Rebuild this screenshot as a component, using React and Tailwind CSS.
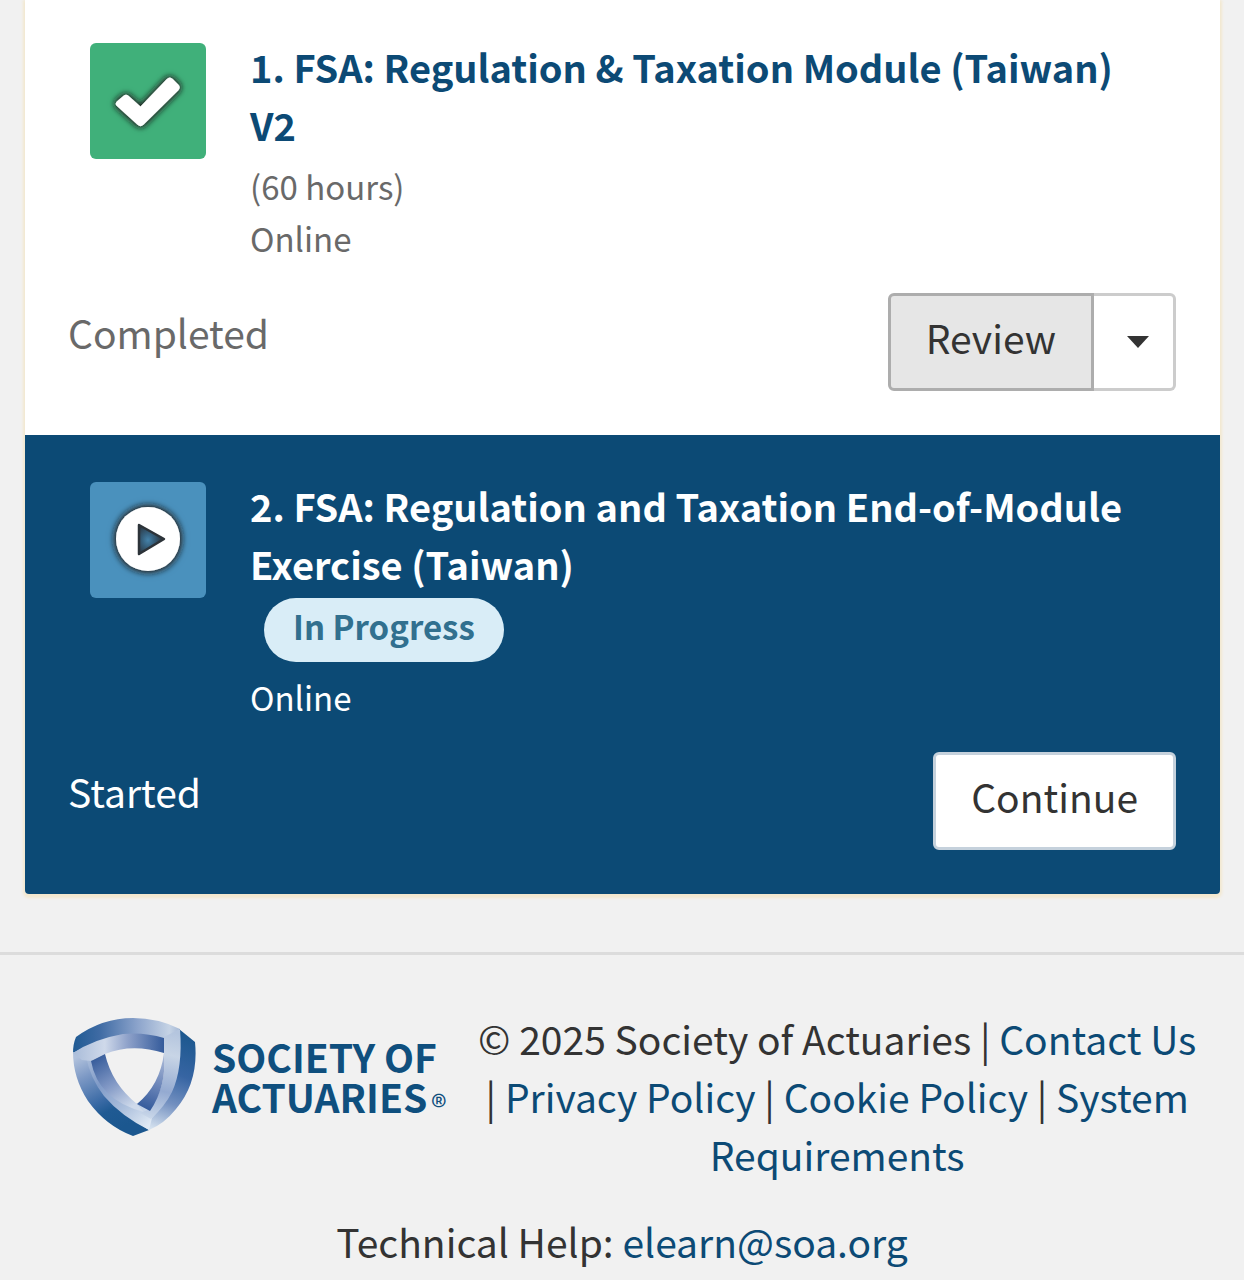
import React from 'react';

function CheckTile() {
    return (
        <svg viewBox="0 0 116 116" className="size-[116px] shrink-0" aria-hidden="true">
            <defs>
                <filter id="checkGlow" x="-40%" y="-40%" width="180%" height="180%">
                    <feDropShadow dx="0" dy="0" stdDeviation="3" floodColor="#222" floodOpacity="1" />
                    <feDropShadow dx="0" dy="0" stdDeviation="2.5" floodColor="#333" floodOpacity="0.8" />
                </filter>
            </defs>
            <rect width="116" height="116" rx="6" fill="#40b07a" />
            <path
                d="M26.8 58.5 L33.2 53 Q36 50.5 38.8 53 L50.5 63.500 L76.8 36 Q79.8 32.8 82.8 36 L88.5 41.8 Q91 44.5 88.5 47.3 L53.5 81.8 Q50.5 84.5 47.5 81.8 L26.8 63 Q24.5 60.8 26.8 58.500 Z"
                fill="#fff"
                filter="url(#checkGlow)"
            />
        </svg>
    );
}

function PlayTile() {
    return (
        <svg viewBox="0 0 116 116" className="size-[116px] shrink-0" aria-hidden="true">
            <defs>
                <filter id="playGlow" x="-40%" y="-40%" width="180%" height="180%">
                    <feDropShadow dx="0" dy="0" stdDeviation="3.5" floodColor="#222" floodOpacity="1" />
                    <feDropShadow dx="0" dy="0" stdDeviation="2.5" floodColor="#333" floodOpacity="0.8" />
                </filter>
                <radialGradient id="playFill" cx="0.36" cy="0.52" r="0.6">
                    <stop offset="0" stopColor="#4482aa" />
                    <stop offset="0.4" stopColor="#355f7c" />
                    <stop offset="1" stopColor="#2b3138" />
                </radialGradient>
            </defs>
            <rect width="116" height="116" rx="6" fill="#4a91bd" />
            <circle cx="58" cy="57" r="32" fill="#fff" filter="url(#playGlow)" />
            <path
                d="M49 43 L74 57 L49 72 Z"
                fill="url(#playFill)"
                stroke="#2c3339"
                strokeWidth="2.5"
                strokeLinejoin="round"
            />
        </svg>
    );
}

function Shield() {
    return (
        <svg viewBox="0 0 124 120" className="w-[124px] shrink-0" aria-hidden="true">
            <defs>
                <linearGradient id="outerTop" x1="0" y1="0" x2="1" y2="0">
                    <stop offset="0" stopColor="#1f5a93" />
                    <stop offset="0.25" stopColor="#3f6ba4" />
                    <stop offset="0.6" stopColor="#8ba3cb" />
                    <stop offset="0.9" stopColor="#c5d3e5" />
                    <stop offset="1" stopColor="#a6b9d6" />
                </linearGradient>
                <linearGradient id="innerTop" x1="0" y1="0" x2="1" y2="0">
                    <stop offset="0" stopColor="#a9bcd9" />
                    <stop offset="0.35" stopColor="#cfd9ea" />
                    <stop offset="0.6" stopColor="#8fa2ca" />
                    <stop offset="1" stopColor="#345b9b" />
                </linearGradient>
                <linearGradient id="outerLeft" gradientUnits="userSpaceOnUse" x1="8" y1="38" x2="45" y2="112">
                    <stop offset="0" stopColor="#b0c1dc" />
                    <stop offset="0.25" stopColor="#7d99c5" />
                    <stop offset="0.6" stopColor="#3a6aa5" />
                    <stop offset="0.75" stopColor="#1f5a93" />
                    <stop offset="1" stopColor="#1b578f" />
                </linearGradient>
                <linearGradient id="midLeft" gradientUnits="userSpaceOnUse" x1="14" y1="42" x2="76" y2="108">
                    <stop offset="0" stopColor="#a9bcd9" />
                    <stop offset="0.3" stopColor="#7f9ac7" />
                    <stop offset="0.65" stopColor="#a9bddb" />
                    <stop offset="1" stopColor="#dfe9f4" />
                </linearGradient>
                <linearGradient id="innerLeft" gradientUnits="userSpaceOnUse" x1="26" y1="40" x2="58" y2="90">
                    <stop offset="0" stopColor="#3a5f9d" />
                    <stop offset="0.5" stopColor="#8198c5" />
                    <stop offset="1" stopColor="#cfdaeb" />
                </linearGradient>
                <linearGradient id="midRight" gradientUnits="userSpaceOnUse" x1="100" y1="14" x2="80" y2="104">
                    <stop offset="0" stopColor="#b4c5de" />
                    <stop offset="0.25" stopColor="#c8d5e6" />
                    <stop offset="0.65" stopColor="#94aad1" />
                    <stop offset="1" stopColor="#cfdcec" />
                </linearGradient>
                <linearGradient id="outerRight" gradientUnits="userSpaceOnUse" x1="115" y1="18" x2="80" y2="110">
                    <stop offset="0" stopColor="#1d588f" />
                    <stop offset="0.4" stopColor="#3765a3" />
                    <stop offset="0.7" stopColor="#7390c0" />
                    <stop offset="1" stopColor="#d3e0ee" />
                </linearGradient>
                <linearGradient id="innerRight" gradientUnits="userSpaceOnUse" x1="92" y1="36" x2="72" y2="92">
                    <stop offset="0" stopColor="#b0bfdb" />
                    <stop offset="0.5" stopColor="#7089bb" />
                    <stop offset="1" stopColor="#31589a" />
                </linearGradient>
            </defs>
            <path d="M4 19 Q30 0 61 0 Q86 0 108 11 L107 26 L92 21 Q70 15 51 17 Q22 23 1 35 Q1 26 4 19 Z" fill="url(#outerTop)" />
            <path d="M1 34 L20 42 Q24 80 77 112 L61 118 Q34 108 16 83 Q1 60 1 34 Z" fill="url(#outerLeft)" />
            <path d="M14 38 L20 42 Q34 76 66 86 L78 92 L90 100 L77 112 Q49 98 32 78 Q18 60 14 38 Z" fill="url(#midLeft)" />
            <path d="M1 35 Q22 21 51 16 Q72 14 92 20 L92 35 Q60 25 33 36 L19 43 L10 42 Z" fill="url(#innerTop)" />
            <path d="M19 43 L33 36 Q40 66 65 86 L72 94 Q26 82 19 43 Z" fill="url(#innerLeft)" />
            <path d="M107 11 L123 24 Q127 64 104 91 Q92 106 77 112 L80 100 Q110 70 107 11 Z" fill="url(#outerRight)" />
            <path d="M92 19 L108 11 Q111 50 100 74 Q93 88 79 101 L68 95 L78 91 Q95 68 92 35 Z" fill="url(#midRight)" />
            <path d="M92 35 Q95 68 78 93 L65 86 Q88 67 92 35 Z" fill="url(#innerRight)" />
        </svg>
    );
}

function ModuleItem({ icon, title, titleClass, textClass, badge, details, status, action, className }) {
    return (
        <li className={className}>
            <div className="flex items-start gap-11 pl-[22px]">
                <div className="pt-[5px]">{icon}</div>
                <div className="min-w-0 flex-1">
                    <h2 className={`pr-6 text-[38px] leading-[58px] font-bold ${titleClass}`}>{title}</h2>
                    {badge && (
                        <div className="flex pt-[5px] pb-[9px]">
                            <span className="ml-3.5 h-16 rounded-full bg-[#d9edf7] px-[29px] text-[33px] leading-[56px] font-bold text-[#31708f]">
                                {badge}
                            </span>
                        </div>
                    )}
                    <div className={`text-[33px] leading-[52px] ${textClass} ${badge ? '' : 'pt-1.5'}`}>
                        {details.map((line) => (
                            <p key={line}>{line}</p>
                        ))}
                    </div>
                </div>
            </div>
            <div className="mt-[29px] flex items-start justify-between">
                <p className={`pt-2.5 text-[39px] leading-[58px] ${textClass}`}>{status}</p>
                {action}
            </div>
        </li>
    );
}

function FooterLink({ href, children }) {
    return (
        <a href={href} className="text-[#0c4a75]">
            {children}
        </a>
    );
}

export default function App() {
    return (
        <div className="min-h-screen bg-[#f1f1f1] font-['Noto_Sans_CJK_SC',sans-serif] text-[#333]">
            <main className="border-b-3 border-[#dcdcdc] pr-6 pb-[58px] pl-[25px]">
                <ol className="overflow-hidden rounded-b-sm bg-white shadow-[0_2px_3px_2px_#f3e8cf]">
                    <ModuleItem
                        className="pt-[38px] pr-11 pb-11 pl-[43px]"
                        icon={<CheckTile />}
                        title="1. FSA: Regulation & Taxation Module (Taiwan) V2"
                        titleClass="text-[#0c4a75]"
                        textClass="text-[#696969]"
                        details={['(60 hours)', 'Online']}
                        status="Completed"
                        action={
                            <div className="flex h-[98px] text-[39px]">
                                <button className="rounded-l-md border-3 border-[#adadad] bg-[#e6e6e6] px-[35px] pb-2.5">
                                    Review
                                </button>
                                <button
                                    aria-label="More options"
                                    className="flex w-[82px] items-center justify-center rounded-r-md border-3 border-l-0 border-[#ccc] bg-white pl-2"
                                >
                                    <svg viewBox="0 0 22 12" className="w-[22px]" aria-hidden="true">
                                        <path d="M0 0 H22 L11 12 Z" fill="#333" />
                                    </svg>
                                </button>
                            </div>
                        }
                    />
                    <ModuleItem
                        className="bg-[#0c4a75] pt-[42px] pr-11 pb-11 pl-[43px]"
                        icon={<PlayTile />}
                        title="2. FSA: Regulation and Taxation End-of-Module Exercise (Taiwan)"
                        titleClass="text-white"
                        textClass="text-white"
                        badge="In Progress"
                        details={['Online']}
                        status="Started"
                        action={
                            <button className="h-[98px] rounded-md border-3 border-[#c5d1dc] bg-white px-[35px] pb-2.5 text-[39px]">
                                Continue
                            </button>
                        }
                    />
                </ol>
            </main>

            <footer className="pt-[54px] text-[39px] leading-[58px]">
                <div className="flex items-start gap-6 pr-10 pl-[72px]">
                    <a href="#home" className="flex items-start gap-4 pt-[9px] text-[#0f4f7e]">
                        <Shield />
                        <span className="pt-[18px] text-[39px] leading-10 font-bold whitespace-nowrap">
                            SOCIETY OF
                            <br />
                            ACTUARIES
                            <span className="ml-1 align-[-6px] text-[32px] leading-none font-normal">®</span>
                        </span>
                    </a>
                    <p className="min-w-0 flex-1 text-center">
                        © 2025 Society of Actuaries | <FooterLink href="#contact">Contact Us</FooterLink> |{' '}
                        <FooterLink href="#privacy">Privacy Policy</FooterLink> |{' '}
                        <FooterLink href="#cookies">Cookie Policy</FooterLink> |{' '}
                        <FooterLink href="#requirements">System Requirements</FooterLink>
                    </p>
                </div>
                <p className="pt-[29px] text-center">
                    Technical Help: <FooterLink href="mailto:elearn@soa.org">elearn@soa.org</FooterLink>
                </p>
            </footer>
        </div>
    );
}
